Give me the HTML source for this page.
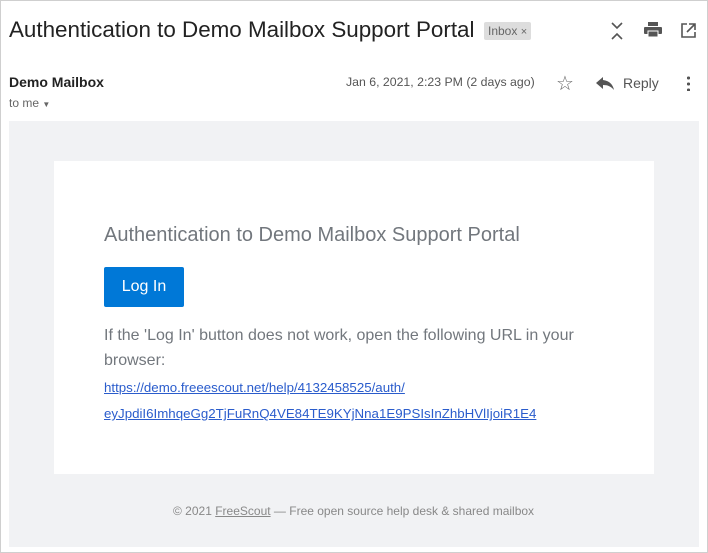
<!DOCTYPE html>
<html><head><style>
body{margin:0;width:708px;height:553px;overflow:hidden;background:#fff;font-family:"Liberation Sans",Arial,sans-serif;position:relative}
.frame{position:absolute;left:0;top:0;width:706px;height:551px;border:1px solid #cfcfcf}
.a{position:absolute;white-space:nowrap}
</style></head><body>
<div class="frame"></div>
<div class="a" style="left:9px;top:17px;font-size:22.4px;color:#222">Authentication to Demo Mailbox Support Portal</div>
<div class="a" style="left:484px;top:22px;background:#ddd;color:#666;font-size:12px;padding:2px 4px;border-radius:2px;height:14px;line-height:14px">Inbox <span style="font-size:11px">×</span></div>
<svg class="a" style="left:609px;top:21px" width="16" height="20" viewBox="0 0 16 20"><path d="M3 2l5 5 5-5M3 18l5-5 5 5" stroke="#555" stroke-width="1.6" fill="none"/></svg>
<svg class="a" style="left:644px;top:22px" width="18" height="16" viewBox="0 0 18 16"><rect x="4" y="0" width="10" height="4" fill="#555"/><rect x="0" y="5" width="18" height="7" rx="1" fill="#555"/><rect x="4" y="9" width="10" height="6" fill="#555" stroke="#fff" stroke-width="1"/></svg>
<svg class="a" style="left:681px;top:23px" width="15" height="15" viewBox="0 0 15 15"><path d="M6 1H1v13h13V9M8 1h6v6M14 1L6 9" stroke="#555" stroke-width="1.6" fill="none"/></svg>
<div class="a" style="left:9px;top:74px;font-size:14px;font-weight:bold;color:#222">Demo Mailbox</div>
<div class="a" style="left:9px;top:96px;font-size:12px;color:#666">to me <span style="font-size:8px">▼</span></div>
<div class="a" style="left:346px;top:75px;font-size:12.3px;color:#555">Jan 6, 2021, 2:23 PM (2 days ago)</div>
<div class="a" style="left:556px;top:71px;font-size:20px;color:#666">☆</div>
<svg class="a" style="left:596px;top:77px" width="18" height="14" viewBox="0 0 18 14"><path d="M7 0L0 6l7 6V8c5 0 8 1.5 11 5-1-5-4-9-11-10z" fill="#555"/></svg>
<div class="a" style="left:623px;top:75px;font-size:14px;color:#555">Reply</div>
<div class="a" style="left:687px;top:75px;width:3px;height:16px;background:radial-gradient(circle,#555 1.5px,transparent 1.6px) 0 0/3px 6px repeat-y"></div>
<div class="a" style="left:9px;top:121px;width:690px;height:426px;background:#f1f2f4"></div>
<div class="a" style="left:54px;top:161px;width:600px;height:313px;background:#fff"></div>
<div class="a" style="left:104px;top:224px;font-size:20px;color:#72777d">Authentication to Demo Mailbox Support Portal</div>
<div class="a" style="left:104px;top:267px;width:80px;height:40px;background:#0078d7;border-radius:2px;color:#fff;font-size:16px;line-height:40px;text-align:center">Log In</div>
<div class="a" style="left:104px;top:323px;font-size:16px;color:#72777d;line-height:25px;white-space:normal;width:500px">If the 'Log In' button does not work, open the following URL in your browser:</div>
<div class="a" style="left:104px;top:375px;font-size:13.3px;color:#2a5ccc;text-decoration:underline;line-height:26px">https://demo.freeescout.net/help/4132458525/auth/<br>eyJpdiI6ImhqeGg2TjFuRnQ4VE84TE9KYjNna1E9PSIsInZhbHVlIjoiR1E4</div>
<div class="a" style="left:173px;top:504px;font-size:12px;color:#888">© 2021 <span style="text-decoration:underline">FreeScout</span> — Free open source help desk &amp; shared mailbox</div>
</body></html>
